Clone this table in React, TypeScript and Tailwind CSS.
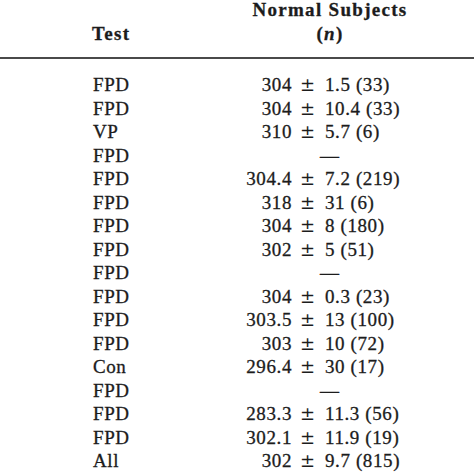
const rows: [string, string | null, string | null][] = [
  ['FPD', '304', '1.5 (33)'],
  ['FPD', '304', '10.4 (33)'],
  ['VP', '310', '5.7 (6)'],
  ['FPD', null, null],
  ['FPD', '304.4', '7.2 (219)'],
  ['FPD', '318', '31 (6)'],
  ['FPD', '304', '8 (180)'],
  ['FPD', '302', '5 (51)'],
  ['FPD', null, null],
  ['FPD', '304', '0.3 (23)'],
  ['FPD', '303.5', '13 (100)'],
  ['FPD', '303', '10 (72)'],
  ['Con', '296.4', '30 (17)'],
  ['FPD', null, null],
  ['FPD', '283.3', '11.3 (56)'],
  ['FPD', '302.1', '11.9 (19)'],
  ['All', '302', '9.7 (815)'],
]

export default function App() {
  return (
    <div className="w-[474px] h-[474px] overflow-hidden bg-white text-[#1c1c1c] font-['Liberation_Serif',serif] text-[19px] tracking-[0.6px] [-webkit-text-stroke:0.3px_#1c1c1c]">
      <div className="-mt-[2px] leading-[24px] font-bold tracking-[1.3px]">
        <div className="flex">
          <span className="w-[248px]" />
          <span className="w-[164px] text-center">Normal Subjects</span>
        </div>
        <div className="flex">
          <span className="pl-[92px] w-[248px]">Test</span>
          <span className="w-[164px] text-center">
            (<i>n</i>)
          </span>
        </div>
      </div>
      <div className="mt-[11px] h-[2px] bg-[#4a4a4a]" />
      <div className="mt-[14px] leading-[23.5px]">
        {rows.map(([test, left, right], i) => (
          <div key={i} className="flex items-baseline h-[23.5px]">
            <span className="pl-[93px] w-[200px]">{test}</span>
            {left === null ? (
              <span className="ml-[120px] tracking-normal">—</span>
            ) : (
              <>
                <span className="w-[92px] text-right">{left}</span>
                <span className="ml-[8px] w-[15px] text-center tracking-normal font-['DejaVu_Serif',serif] text-[18px] leading-[23.5px] [-webkit-text-stroke:0px]">±</span>
                <span className="ml-[10px]">{right}</span>
              </>
            )}
          </div>
        ))}
      </div>
    </div>
  )
}
